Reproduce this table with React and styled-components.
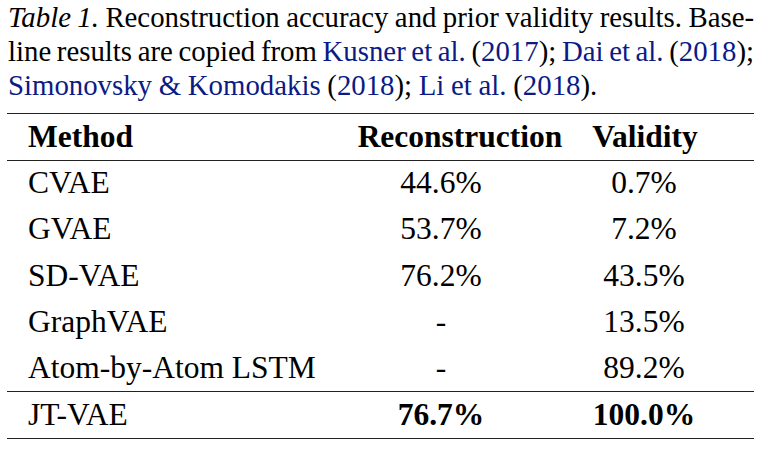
import React from 'react';
import styled, { createGlobalStyle } from 'styled-components';

const serif = `"Liberation Serif", "DejaVu Serif", serif`;

const GlobalStyle = createGlobalStyle`
  html, body {
    margin: 0;
    padding: 0;
    background: #fff;
  }
  body {
    font-family: ${serif};
    color: #000;
  }
`;

const Page = styled.div`
  width: 768px;
  height: 449px;
  padding: 0 14px 0 7px;
  box-sizing: border-box;
  overflow: hidden;
  font-family: ${serif};
`;

const Caption = styled.div`
  font-family: ${serif};
  font-size: 28.8px;
  line-height: 34.2px;
  padding-left: 1px;
`;

const CaptionLine = styled.div`
  text-align: justify;
  text-align-last: ${p => (p.$last ? 'left' : 'justify')};
  word-spacing: ${p => (p.$last ? '-0.5px' : '-3px')};
  white-space: nowrap;
`;

const Label = styled.i`
  font-style: italic;
`;

const Cite = styled.span`
  color: #0b1a85;
`;

const Table = styled.table`
  width: 747px;
  margin-top: 10px;
  border-collapse: collapse;
  font-family: ${serif};
  font-size: 31.5px;
  border-top: 1.5px solid #222;
  border-bottom: 1.5px solid #222;
`;

const Row = styled.tr`
  height: ${p => (p.$tall ? 47 : 46.2)}px;
  border-top: ${p => (p.$rule ? '1.5px solid #222' : 'none')};
`;

const HeadCell = styled.th`
  font-family: ${serif};
  font-weight: bold;
  padding: 0;
  text-align: ${p => (p.$left ? 'left' : 'center')};
  padding-left: ${p => (p.$left ? '21px' : '0')};
  padding-right: ${p => p.$pr || 0}px;
`;

const Cell = styled.td`
  font-family: ${serif};
  padding: 0;
  font-weight: ${p => (p.$bold ? 'bold' : 'normal')};
  text-align: ${p => (p.$left ? 'left' : 'center')};
  padding-left: ${p => (p.$left ? '21px' : '0')};
  padding-right: ${p => p.$pr || 0}px;
`;

const rows = [
  ['CVAE', '44.6%', '0.7%'],
  ['GVAE', '53.7%', '7.2%'],
  ['SD-VAE', '76.2%', '43.5%'],
  ['GraphVAE', '-', '13.5%'],
  ['Atom-by-Atom LSTM', '-', '89.2%'],
];

export default function App() {
  return (
    <Page>
      <GlobalStyle />
      <Caption>
        <CaptionLine>
          <Label>Table 1.</Label> Reconstruction accuracy and prior validity results. Base-
        </CaptionLine>
        <CaptionLine>
          line results are copied from <Cite>Kusner et al.</Cite> (<Cite>2017</Cite>); <Cite>Dai et al.</Cite> (<Cite>2018</Cite>);
        </CaptionLine>
        <CaptionLine $last>
          <Cite>Simonovsky &amp; Komodakis</Cite> (<Cite>2018</Cite>); <Cite>Li et al.</Cite> (<Cite>2018</Cite>).
        </CaptionLine>
      </Caption>
      <Table>
        <colgroup>
          <col style={{ width: 338 }} />
          <col style={{ width: 230 }} />
          <col style={{ width: 179 }} />
        </colgroup>
        <thead>
          <Row $tall>
            <HeadCell $left>Method</HeadCell>
            <HeadCell>Reconstruction</HeadCell>
            <HeadCell $pr={39}>Validity</HeadCell>
          </Row>
        </thead>
        <tbody>
          {rows.map((r, i) => (
            <Row key={r[0]} $rule={i === 0}>
              <Cell $left>{r[0]}</Cell>
              <Cell $pr={38}>{r[1]}</Cell>
              <Cell $pr={41}>{r[2]}</Cell>
            </Row>
          ))}
          <Row $tall $rule>
            <Cell $left>JT-VAE</Cell>
            <Cell $bold $pr={38}>76.7%</Cell>
            <Cell $bold $pr={41}>100.0%</Cell>
          </Row>
        </tbody>
      </Table>
    </Page>
  );
}
